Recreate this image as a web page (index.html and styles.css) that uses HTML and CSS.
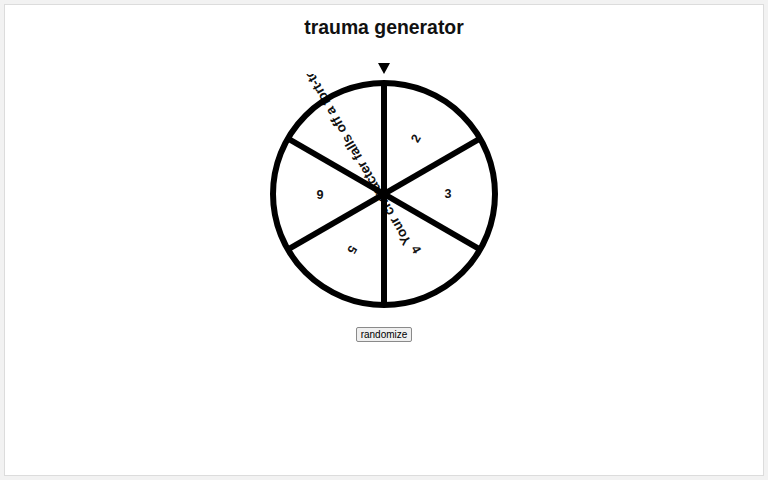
FILE: index.html
```html
<!DOCTYPE html>
<html lang="en">
<head>
    <meta charset="UTF-8">
    <meta name="viewport" content="width=device-width, initial-scale=1.0">
    <title>trauma generator</title>
    <link rel="stylesheet" href="styles.css">
</head>
<body>
    <div class="container">
        <h1>trauma generator</h1>

        <!-- pointer sits just above the top of the wheel -->
        <div class="pointer"></div>

        <svg class="wheel" width="240" height="240" viewBox="-120 -120 240 240">
            <circle r="111" fill="#fff"/>

            <!-- labels, rotated so they read outward from the middle -->
            <g class="labels">
                <text class="long" transform="rotate(-120)" x="-55">Your character falls off a fort-tower</text>
                <text transform="rotate(-60)" x="64">2</text>
                <text transform="rotate(0)" x="64">3</text>
                <text transform="rotate(60)" x="64">4</text>
                <text transform="rotate(120)" x="64">5</text>
                <text transform="rotate(180)" x="64">6</text>
            </g>

            <!-- slice dividers -->
            <g class="dividers">
                <line x1="0" y1="-111" x2="0" y2="111"/>
                <line x1="96.13" y1="-55.5" x2="-96.13" y2="55.5"/>
                <line x1="96.13" y1="55.5" x2="-96.13" y2="-55.5"/>
            </g>
            <circle r="111" fill="none" stroke="#000" stroke-width="6"/>
        </svg>

        <button class="spin">randomize</button>
    </div>
</body>
</html>
```

FILE: styles.css
```css
body {
    font-family: "Liberation Sans", Arial, sans-serif;
    background-color: #f2f2f2;
    margin: 0;
    padding: 4px;
}
.container {
    box-sizing: border-box;
    height: calc(100vh - 8px);
    background: white;
    border: 1px solid #dcdcdc;
    display: flex;
    flex-direction: column;
    align-items: center;
}
h1 {
    font-size: 19.4px;
    line-height: 22px;
    margin: 11px 0 25px;
    color: #111;
}
.pointer {
    width: 0;
    height: 0;
    border-left: 6px solid transparent;
    border-right: 6px solid transparent;
    border-top: 11px solid #000;
}
.wheel {
    display: block;
}
.labels text {
    font-family: "Liberation Sans", Arial, sans-serif;
    font-size: 12.5px;
    font-weight: bold;
    fill: #111;
    text-anchor: middle;
    dominant-baseline: central;
}
/* long entries run through the hub and sit on the spoke */
.labels .long {
    font-size: 13.5px;
    text-anchor: start;
    dominant-baseline: alphabetic;
}
.dividers line {
    stroke: #000;
    stroke-width: 6;
}
.spin {
    margin-top: 13px;
    font-family: "Liberation Sans", Arial, sans-serif;
    font-size: 10px;
    padding: 1px 4px;
    background-color: #efefef;
    border: 1px solid #8a8a8a;
    border-radius: 2px;
    color: #000;
}
```
